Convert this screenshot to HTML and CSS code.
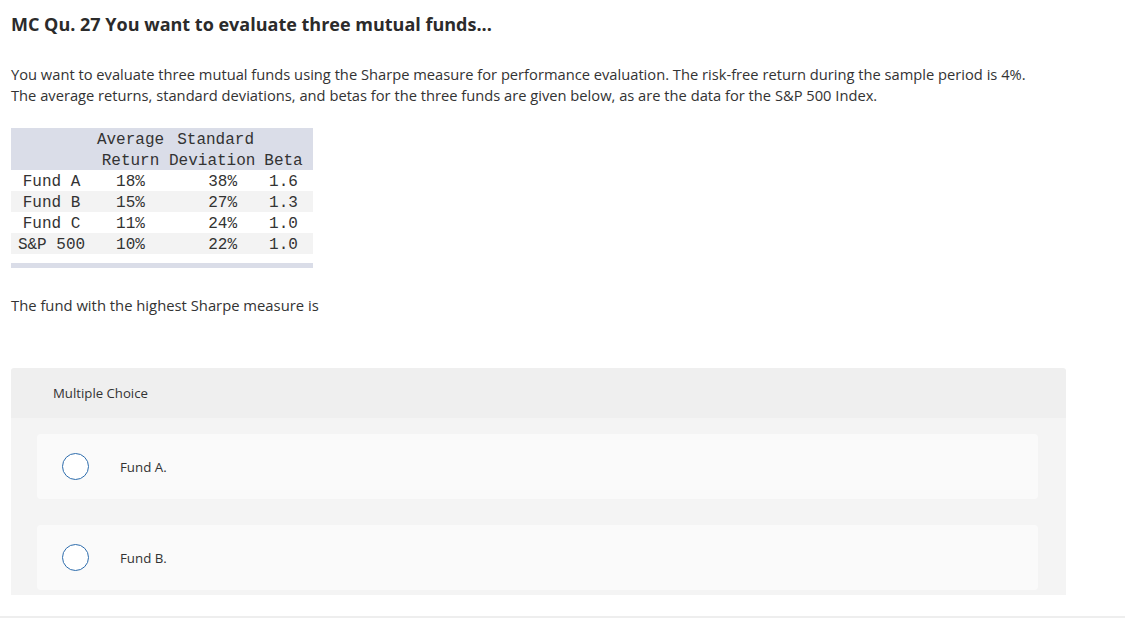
FILE: index.html
```html
<!DOCTYPE html>
<html lang="en">
<head>
<meta charset="utf-8">
<title>MC Qu. 27</title>
<link rel="stylesheet" href="styles.css">
</head>
<body>
<div class="page">
  <h1 class="title">MC Qu. 27 You want to evaluate three mutual funds...</h1>
  <p class="prompt">You want to evaluate three mutual funds using the Sharpe measure for performance evaluation. The risk-free return during the sample period is 4%.<br>The average returns, standard deviations, and betas for the three funds are given below, as are the data for the S&amp;P 500 Index.</p>

  <div class="data">
    <table class="funds">
      <colgroup>
        <col class="w1"><col class="w2"><col class="w3"><col class="w4">
      </colgroup>
      <thead>
        <tr>
          <th class="c1"></th>
          <th class="c2">Average</th>
          <th class="c3">Standard</th>
          <th class="c4"></th>
        </tr>
        <tr>
          <th class="c1"></th>
          <th class="c2">Return</th>
          <th class="c3">Deviation</th>
          <th class="c4">Beta</th>
        </tr>
      </thead>
      <tbody>
        <tr><td class="c1">Fund A</td><td class="c2">18%</td><td class="c3 v">38%</td><td class="c4">1.6</td></tr>
        <tr class="alt"><td class="c1">Fund B</td><td class="c2">15%</td><td class="c3 v">27%</td><td class="c4">1.3</td></tr>
        <tr><td class="c1">Fund C</td><td class="c2">11%</td><td class="c3 v">24%</td><td class="c4">1.0</td></tr>
        <tr class="alt"><td class="c1">S&amp;P 500</td><td class="c2">10%</td><td class="c3 v">22%</td><td class="c4">1.0</td></tr>
      </tbody>
    </table>
    <div class="data-foot"></div>
  </div>

  <p class="question">The fund with the highest Sharpe measure is</p>

  <section class="mc">
    <div class="mc-head">Multiple Choice</div>
    <div class="mc-body">
      <label class="option">
        <span class="radio"></span>
        <span class="opt-text">Fund A.</span>
      </label>
      <label class="option">
        <span class="radio"></span>
        <span class="opt-text">Fund B.</span>
      </label>
    </div>
  </section>
</div>
<div class="bottom-rule"></div>
</body>
</html>
```

FILE: styles.css
```css
html, body {
  margin: 0;
  padding: 0;
  background: #ffffff;
}

body {
  font-family: "Open Sans", "Liberation Sans", sans-serif;
  color: #333333;
  height: 618px;
  overflow: hidden;
}

.page {
  padding: 12px 59px 0 11px;
  height: 604px;
}

.title {
  margin: 0;
  font-size: 18px;
  line-height: 24px;
  font-weight: 700;
  color: #2b2b2b;
}

.prompt {
  margin: 28px 0 0 0;
  font-size: 14.7px;
  line-height: 21px;
  color: #333333;
}

.data {
  margin-top: 22px;
  width: 302px;
}

.funds {
  border-collapse: collapse;
  width: 302px;
  table-layout: fixed;
  font-family: "Liberation Mono", "Courier New", monospace;
  font-size: 16px;
  color: #333333;
}

.funds .w1 { width: 81px; }
.funds .w2 { width: 77px; }
.funds .w3 { width: 89px; }
.funds .w4 { width: 55px; }

.funds th,
.funds td {
  box-sizing: border-box;
  padding: 4px 0 0 0;
  height: 21px;
  line-height: 17px;
  font-weight: 400;
  white-space: nowrap;
}

.funds thead tr {
  background: #dadde8;
}

.funds thead tr:first-child th {
  height: 20px;
}

.funds .c1 { text-align: center; }
.funds .c2 { text-align: center; }
.funds .c3 { text-align: right; padding-right: 4px; }
.funds .c4 { text-align: center; padding-right: 4px; }
.funds td.v { padding-right: 21px; }

.funds .alt {
  background: #f3f3f3;
}

.data-foot {
  margin-top: 9px;
  height: 5px;
  background: #dadde8;
}

.question {
  margin: 27px 0 0 0;
  font-size: 14.8px;
  line-height: 20px;
  color: #333333;
}

.mc {
  margin-top: 53px;
  width: 1055px;
  border-radius: 3px 3px 0 0;
  overflow: hidden;
}

.mc-head {
  background: #efefef;
  height: 50px;
  line-height: 50px;
  padding-left: 42px;
  font-size: 13.2px;
  color: #333333;
}

.mc-body {
  background: #f4f4f4;
  padding: 16px 28px 5px 26px;
  display: flex;
  flex-direction: column;
  gap: 26px;
}

.option {
  display: flex;
  align-items: center;
  height: 65px;
  background: #fafafa;
  border-radius: 4px;
  padding-left: 25px;
}

.radio {
  width: 25px;
  height: 25px;
  border: 1.5px solid #2d6cac;
  border-radius: 50%;
  background: #ffffff;
  flex: none;
}

.opt-text {
  margin-left: 31px;
  font-size: 13.3px;
  color: #333333;
}

.bottom-rule {
  height: 2px;
  background: #eeeeee;
}
```
